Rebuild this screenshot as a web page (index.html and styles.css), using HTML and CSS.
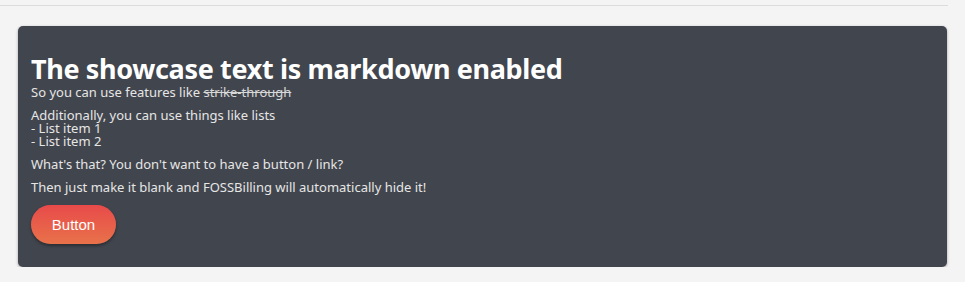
FILE: index.html
```html
<!DOCTYPE html>
<html>
<head>
<meta charset="utf-8">
<link rel="stylesheet" href="styles.css">
</head>
<body>
<div class="page">
  <hr class="rule">
  <section class="showcase">
    <h1 class="title">The showcase text is markdown enabled</h1>
    <p class="line">So you can use features like <del>strike-through</del></p>
    <p class="para">Additionally, you can use things like lists<br>- List item 1<br>- List item 2</p>
    <p class="para">What's that? You don't want to have a button / link?</p>
    <p class="para">Then just make it blank and FOSSBilling will automatically hide it!</p>
    <a class="btn" href="#">Button</a>
  </section>
</div>
</body>
</html>
```
FILE: styles.css
```css
html, body {
  margin: 0;
  padding: 0;
  background: #f4f4f4;
  font-family: "Noto Sans", "DejaVu Sans", sans-serif;
}
.page {
  padding: 5px 18px 0 0;
}
.rule {
  margin: 0;
  border: 0;
  border-top: 1px solid #dcdcdc;
  width: 948px;
}
.showcase {
  margin: 20px 0 0 18px;
  width: 929px;
  box-sizing: border-box;
  height: 241px;
  background: #41454d;
  border-radius: 5px;
  box-shadow: 0 1px 3px rgba(0,0,0,0.35);
  padding: 26px 13px 0 13px;
  color: #e6e6e6;
}
.title {
  margin: 0;
  font-size: 27px;
  line-height: 34px;
  font-weight: 700;
  letter-spacing: -0.35px;
  color: #ffffff;
}
.line {
  margin: 0 0 10px;
  font-size: 13px;
  line-height: 13px;
}
.line del { color: #d8d8d8; }
.para {
  margin: 0 0 10px;
  font-size: 13px;
  line-height: 13px;
}
.btn {
  display: inline-block;
  margin-top: 1px;
  width: 85px;
  height: 39px;
  box-sizing: border-box;
  border-radius: 20px;
  background: linear-gradient(#e84a4a, #e8724a);
  color: #fff;
  text-decoration: none;
  font-family: "Liberation Sans", Arial, sans-serif;
  font-size: 15px;
  line-height: 39px;
  text-align: center;
  box-shadow: 0 2px 3px rgba(0,0,0,0.35);
}
```
